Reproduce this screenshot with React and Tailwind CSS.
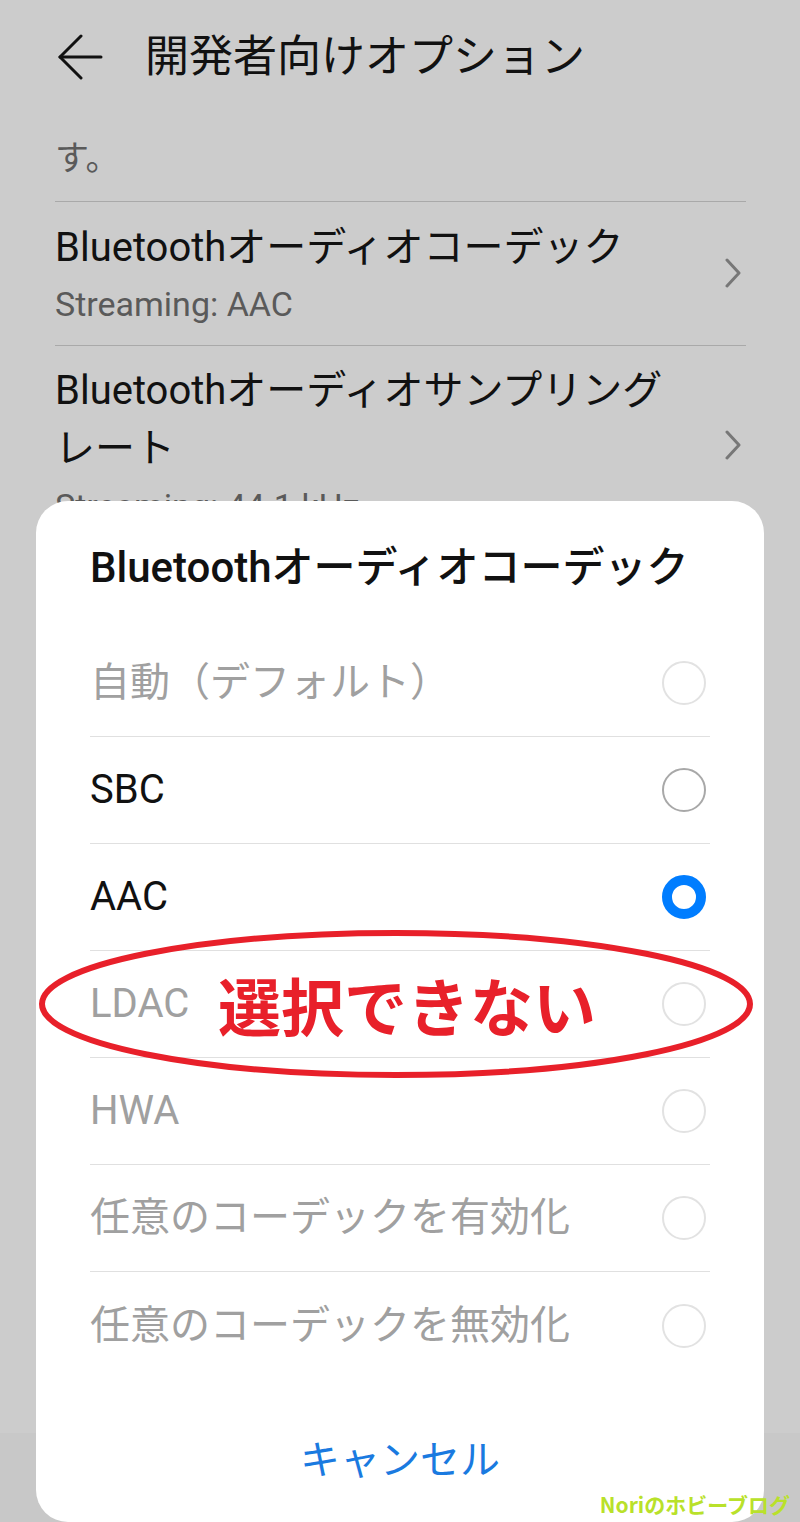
const FONT = "font-['Roboto','Noto_Sans_CJK_JP',sans-serif]";

const OPTIONS = [
  { label: '自動（デフォルト）', enabled: false },
  { label: 'SBC', enabled: true },
  { label: 'AAC', enabled: true, checked: true },
  { label: 'LDAC', enabled: false },
  { label: 'HWA', enabled: false },
  { label: '任意のコーデックを有効化', enabled: false },
  { label: '任意のコーデックを無効化', enabled: false },
];

function BackArrow() {
  return (
    <svg width="46" height="46" viewBox="0 0 46 46" fill="none" stroke="#111" strokeWidth="3" strokeLinecap="round" strokeLinejoin="round">
      <path d="M44 23H3" />
      <path d="M24 2L3 23L24 44" />
    </svg>
  );
}

function Chevron() {
  return (
    <svg width="18" height="30" viewBox="0 0 18 30" fill="none" stroke="#777" strokeWidth="3" strokeLinecap="round" strokeLinejoin="round" className="mr-[4px]">
      <path d="M3 2L15 15L3 28" />
    </svg>
  );
}

function Radio({ enabled, checked }) {
  if (checked) {
    return <div className="w-[44px] h-[44px] rounded-full border-[10px] border-[#007dff] bg-white mr-[4px]" />;
  }
  return (
    <div
      className={`w-[44px] h-[44px] rounded-full border-2 mr-[4px] ${enabled ? 'border-[#a8a8a8]' : 'border-[#e2e2e2]'}`}
    />
  );
}

export default function App() {
  return (
    <div className={`relative w-[800px] h-[1522px] overflow-hidden bg-[#cccccc] flex flex-col ${FONT}`}>
      {/* Header */}
      <div className="h-[114px] flex items-center pl-[57px]">
        <BackArrow />
        <span className="ml-[42px] text-[44px] leading-none text-[#111]">開発者向けオプション</span>
      </div>

      {/* Settings list behind the dialog */}
      <div className="mr-[54px] ml-[55px]">
        <div className="pt-[22px] pb-[21px] text-[34px] leading-[44px] text-[#5a5a5a] border-b border-[#a9a9a9]">
          す。
        </div>

        <div className="flex items-center justify-between pt-[17px] pb-[19px] border-b border-[#a9a9a9]">
          <div>
            <div className="text-[40px] leading-[58px] text-[#111]">Bluetoothオーディオコーデック</div>
            <div className="mt-[5px] text-[34px] leading-[44px] text-[#5a5a5a]">Streaming: AAC</div>
          </div>
          <Chevron />
        </div>

        <div className="flex items-center justify-between pt-[16px] pb-[19px]">
          <div>
            <div className="text-[40px] leading-[58px] text-[#111]">Bluetoothオーディオサンプリング</div>
            <div className="text-[40px] leading-[58px] text-[#111]">レート</div>
            <div className="mt-[6px] text-[34px] leading-[44px] text-[#5a5a5a]">Streaming: 44.1 kHz</div>
          </div>
          <Chevron />
        </div>
      </div>

      {/* Bottom navigation band */}
      <div className="mt-auto h-[89px] bg-[#c8c8c8]" />

      {/* Dialog */}
      <div className="absolute left-[36px] right-[36px] top-[501px] bottom-0 bg-white rounded-[32px] px-[54px] flex flex-col">
        <div className="h-[129px] flex items-center pt-[4px] text-[42px] font-medium text-[#111] leading-none">
          Bluetoothオーディオコーデック
        </div>
        {OPTIONS.map((opt, i) => (
          <div
            key={opt.label}
            className={`h-[107px] flex items-center justify-between ${i < OPTIONS.length - 1 ? 'border-b border-[#e0e0e0]' : ''}`}
          >
            <span className={`text-[40px] leading-none ${opt.enabled ? 'text-[#111]' : 'text-[#a0a0a0]'}`}>
              {opt.label}
            </span>
            <Radio enabled={opt.enabled} checked={opt.checked} />
          </div>
        ))}
        <div className="flex-1 flex items-center justify-center pt-[20px] text-[40px] leading-none text-[#1a7ae0]">
          キャンセル
        </div>
      </div>

      {/* Annotation */}
      <svg className="absolute left-[36px] top-[926px]" width="724" height="156" viewBox="0 0 724 156" fill="none">
        <ellipse cx="360" cy="78" rx="354" ry="71" stroke="#e8202a" strokeWidth="6" />
      </svg>
      <div className="absolute left-[218px] top-[972px] text-[63px] leading-none font-bold text-[#e8202a] font-['Noto_Sans_CJK_JP',sans-serif]">
        選択できない
      </div>

      {/* Watermark */}
      <div className="absolute right-[10px] bottom-[7px] text-[21px] leading-none font-bold text-[#b9e12a] font-['Noto_Sans_CJK_JP',sans-serif]">
        Noriのホビーブログ
      </div>
    </div>
  );
}
